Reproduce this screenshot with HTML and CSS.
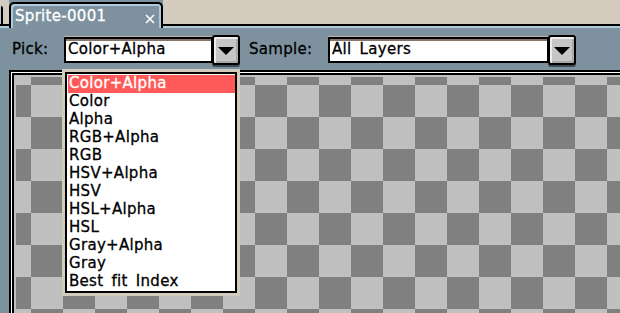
FILE: index.html
```html
<!DOCTYPE html>
<html>
<head>
<meta charset="utf-8">
<link rel="stylesheet" href="styles.css">
</head>
<body>
<div class="app">
  <div class="tabbar">
    <div class="filler filler-left"><div class="prevtab"></div></div>
    <div class="tab">
      <span class="tab-title">Sprite-0001</span>
      <svg class="tab-close" width="10" height="10" viewBox="0 0 10 10"><path d="M1 1 L9 9 M9 1 L1 9" stroke="#fff" stroke-width="1.6" fill="none"/></svg>
    </div>
    <div class="filler filler-right"></div>
  </div>
  <div class="panel">
    <div class="toolbar">
      <span class="lbl lbl-pick">Pick:</span>
      <div class="combo">
        <div class="entry entry-pick">Color+Alpha</div>
        <div class="btn"><svg width="16" height="8" viewBox="0 0 16 8"><polygon points="0,0 16,0 8,8" fill="#000"/></svg></div>
      </div>
      <span class="lbl lbl-sample">Sample:</span>
      <div class="combo">
        <div class="entry entry-sample">All Layers</div>
        <div class="btn"><svg width="16" height="8" viewBox="0 0 16 8"><polygon points="0,0 16,0 8,8" fill="#000"/></svg></div>
      </div>
    </div>
    <div class="editor">
      <div class="editor-white">
        <div class="editor-inner">
          <div class="checker"></div>
        </div>
      </div>
    </div>
  </div>
  <div class="dropdown">
    <ul class="list">
      <li class="item selected">Color+Alpha</li>
      <li class="item">Color</li>
      <li class="item">Alpha</li>
      <li class="item">RGB+Alpha</li>
      <li class="item">RGB</li>
      <li class="item">HSV+Alpha</li>
      <li class="item">HSV</li>
      <li class="item">HSL+Alpha</li>
      <li class="item">HSL</li>
      <li class="item">Gray+Alpha</li>
      <li class="item">Gray</li>
      <li class="item">Best fit Index</li>
    </ul>
  </div>
</div>
</body>
</html>
```

FILE: styles.css
```css
* { box-sizing: border-box; }
html, body {
  margin: 0;
  padding: 0;
  width: 620px;
  height: 313px;
  overflow: hidden;
  background: #7d929e;
}
.app {
  position: relative;
  width: 620px;
  height: 313px;
  overflow: hidden;
  font-family: "DejaVu Sans", "Liberation Sans", sans-serif;
  font-size: 15px;
  letter-spacing: 0.3px;
  word-spacing: 3px;
  -webkit-text-stroke: 0.3px currentColor;
  color: #000;
}
.tabbar {
  display: flex;
  height: 28px;
}
.filler {
  background: linear-gradient(to bottom, #d3cbbe 0 24px, #000 24px 26px, #aecbd9 26px 28px);
}
.filler-left { width: 9px; }
.filler-right { flex: 1; }
.prevtab {
  width: 3px;
  height: 18px;
  margin-top: 6px;
  background: #aecbd9;
  border-right: 2px solid #000;
  border-top-right-radius: 2px;
}
.tab {
  width: 154px;
  height: 26px;
  margin-top: 2px;
  border: 2px solid #000;
  border-bottom: 0;
  border-radius: 5px 5px 0 0;
  background: #7d929e;
  box-shadow: inset 2px 2px 0 #aecbd9, inset -2px 0 0 #aecbd9;
  display: flex;
  align-items: flex-start;
  padding: 2px 6px 0 4px;
  color: #fff;
  line-height: 20px;
}
.tab-title { flex: 1; }
.tab-close { margin-top: 8px; }
.panel {
  height: 285px;
  background: #7d929e;
}
.toolbar {
  display: flex;
  align-items: flex-start;
  height: 42px;
  padding: 7px 0 0 12px;
}
.lbl {
  line-height: 26px;
  margin-top: 1px;
}
.lbl-pick { width: 52px; }
.lbl-sample { width: 79px; margin-left: 9px; }
.combo {
  display: flex;
  align-items: center;
}
.entry {
  height: 26px;
  background: #fff;
  border: 2px solid #000;
  box-shadow: inset 0 2px 0 #86766c, 0 -1px 0 #b9b4ae;
  padding-left: 2px;
  line-height: 20px;
  white-space: nowrap;
  overflow: hidden;
}
.entry-pick { width: 149px; }
.entry-sample { width: 221px; }
.btn {
  width: 28px;
  height: 30px;
  margin-left: -1px;
  border: 2px solid #000;
  border-radius: 3px;
  background: #c6c6c6;
  box-shadow: inset 2px 2px 0 #ececec, inset -2px -2px 0 #a8a8a8, 0 2px 0 #3e4a52;
  display: flex;
  align-items: center;
  justify-content: center;
}
.btn svg { margin-top: 1px; }
.editor {
  margin-left: 9px;
  width: 700px;
  height: 320px;
  border: 2px solid #000;
}
.editor-white {
  height: 100%;
  border: 1px solid #fff;
}
.editor-inner {
  height: 100%;
  border: 2px solid #000;
  padding: 2px;
  background: #c0c0c0;
}
.checker {
  height: 100%;
  background: repeating-conic-gradient(#c0c0c0 0 25%, #808080 0 50%);
  background-size: 64px 64px;
  background-position: -17px 8px;
}
.dropdown {
  position: absolute;
  left: 62px;
  top: 69px;
  border: 3px solid #d3cbbe;
}
.list {
  list-style: none;
  margin: 0;
  padding: 1px 0 0 1px;
  width: 172px;
  border: 2px solid #000;
  background: #fff;
}
.item {
  height: 18px;
  line-height: 16px;
  padding-left: 1px;
  white-space: nowrap;
}
.item.selected {
  background: #ff5a5a;
  color: #fff;
}
```
